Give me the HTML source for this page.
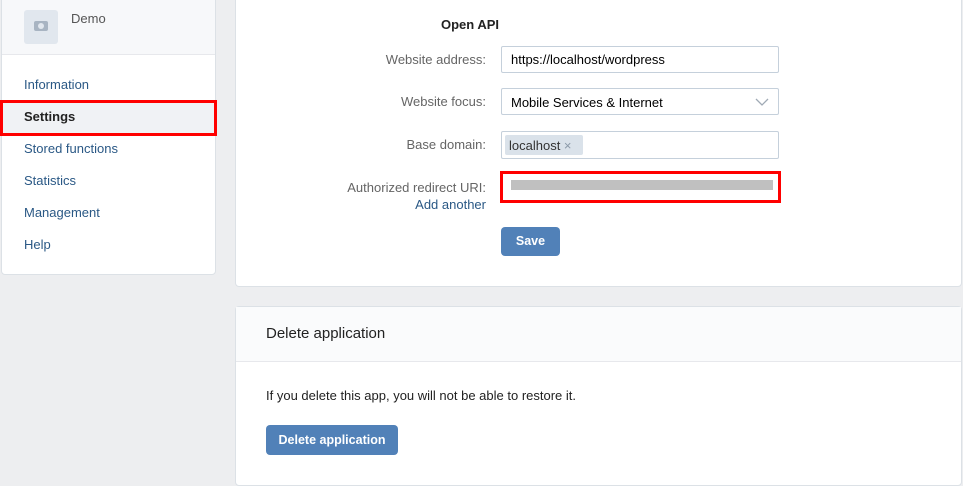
<!DOCTYPE html>
<html><head><style>
body{margin:0;width:963px;height:486px;background:#edeef0;font-family:"Liberation Sans",sans-serif;font-size:13px;position:relative;overflow:hidden;color:#000}
.a{position:absolute}
.lp{left:1px;top:-5px;width:215px;height:280px;background:#fff;border:1px solid #dce1e6;border-radius:4px;box-sizing:border-box}
.nav{left:24px;color:#2a5885}
.lbl{right:477px;color:#656565;text-align:right}
.inp{left:501px;width:278px;height:27px;border:1px solid #c5d0db;box-sizing:border-box;background:#fff;border-radius:2px}
.btn{background:#5181b8;color:#fff;border-radius:4px;font-weight:bold;font-size:12.5px;text-align:center}
</style></head><body>
<div class="a lp"></div>
<div class="a" style="left:2px;top:0;width:213px;height:54px;background:#f7f8fa;border-bottom:1px solid #e7e8ec"></div>
<div class="a" style="left:24px;top:10px;width:34px;height:34px;background:#e1e7ee;border-radius:3px"></div>
<div class="a" style="left:34px;top:21px;width:14px;height:10px;background:#a8b4c2;border-radius:2px"></div>
<div class="a" style="left:38px;top:23px;width:6px;height:6px;background:#e1e7ee;border-radius:50%"></div>
<div class="a" style="left:71px;top:11px;color:#555">Demo</div>
<div class="a nav" style="top:77px">Information</div>
<div class="a" style="left:1px;top:101px;width:214px;height:34px;background:#f0f2f5;border-left:2px solid #5181b8;box-sizing:border-box"></div>
<div class="a" style="left:0;top:100px;width:217px;height:36px;border:3px solid #f00;box-sizing:border-box"></div>
<div class="a" style="left:24px;top:109px;font-weight:bold;color:#222">Settings</div>
<div class="a nav" style="top:141px">Stored functions</div>
<div class="a nav" style="top:173px">Statistics</div>
<div class="a nav" style="top:205px">Management</div>
<div class="a nav" style="top:237px">Help</div>

<div class="a" style="left:235px;top:-5px;width:727px;height:292px;background:#fff;border:1px solid #dce1e6;border-radius:4px;box-sizing:border-box"></div>
<div class="a" style="left:441px;top:17px;font-weight:bold;color:#222">Open API</div>
<div class="a lbl" style="top:52px">Website address:</div>
<div class="a inp" style="top:46px"></div>
<div class="a" style="left:511px;top:52px;color:#000">https://localhost/wordpress</div>
<div class="a lbl" style="top:94px">Website focus:</div>
<div class="a inp" style="top:88px"></div>
<div class="a" style="left:511px;top:95px">Mobile Services &amp; Internet</div>
<svg class="a" style="left:755px;top:97px" width="14" height="10"><path d="M1 2l6 6 6-6" fill="none" stroke="#a0aab5" stroke-width="1.3"/></svg>
<div class="a lbl" style="top:137px">Base domain:</div>
<div class="a inp" style="top:131px;height:28px"></div>
<div class="a" style="left:505px;top:135px;width:78px;height:20px;background:#dae2ea;border-radius:2px"></div>
<div class="a" style="left:509px;top:138px;color:#333">localhost <span style="color:#8b99a8">×</span></div>
<div class="a lbl" style="top:180px">Authorized redirect URI:</div>
<div class="a" style="right:477px;top:197px;color:#2a5885">Add another</div>
<div class="a" style="left:500px;top:171px;width:281px;height:32px;border:3px solid #f00;box-sizing:border-box;background:#fff"></div>
<div class="a" style="left:511px;top:180px;width:262px;height:10px;background:#c0c0c0"></div>
<div class="a btn" style="left:501px;top:227px;width:59px;height:29px;line-height:29px">Save</div>

<div class="a" style="left:235px;top:306px;width:727px;height:180px;background:#fff;border:1px solid #dce1e6;border-radius:4px;box-sizing:border-box"></div>
<div class="a" style="left:236px;top:307px;width:725px;height:54px;background:#fafbfc;border-bottom:1px solid #e7e8ec"></div>
<div class="a" style="left:266px;top:325px;font-size:15px;color:#222">Delete application</div>
<div class="a" style="left:266px;top:388px;color:#222">If you delete this app, you will not be able to restore it.</div>
<div class="a btn" style="left:266px;top:425px;width:132px;height:30px;line-height:30px">Delete application</div>
</body></html>
